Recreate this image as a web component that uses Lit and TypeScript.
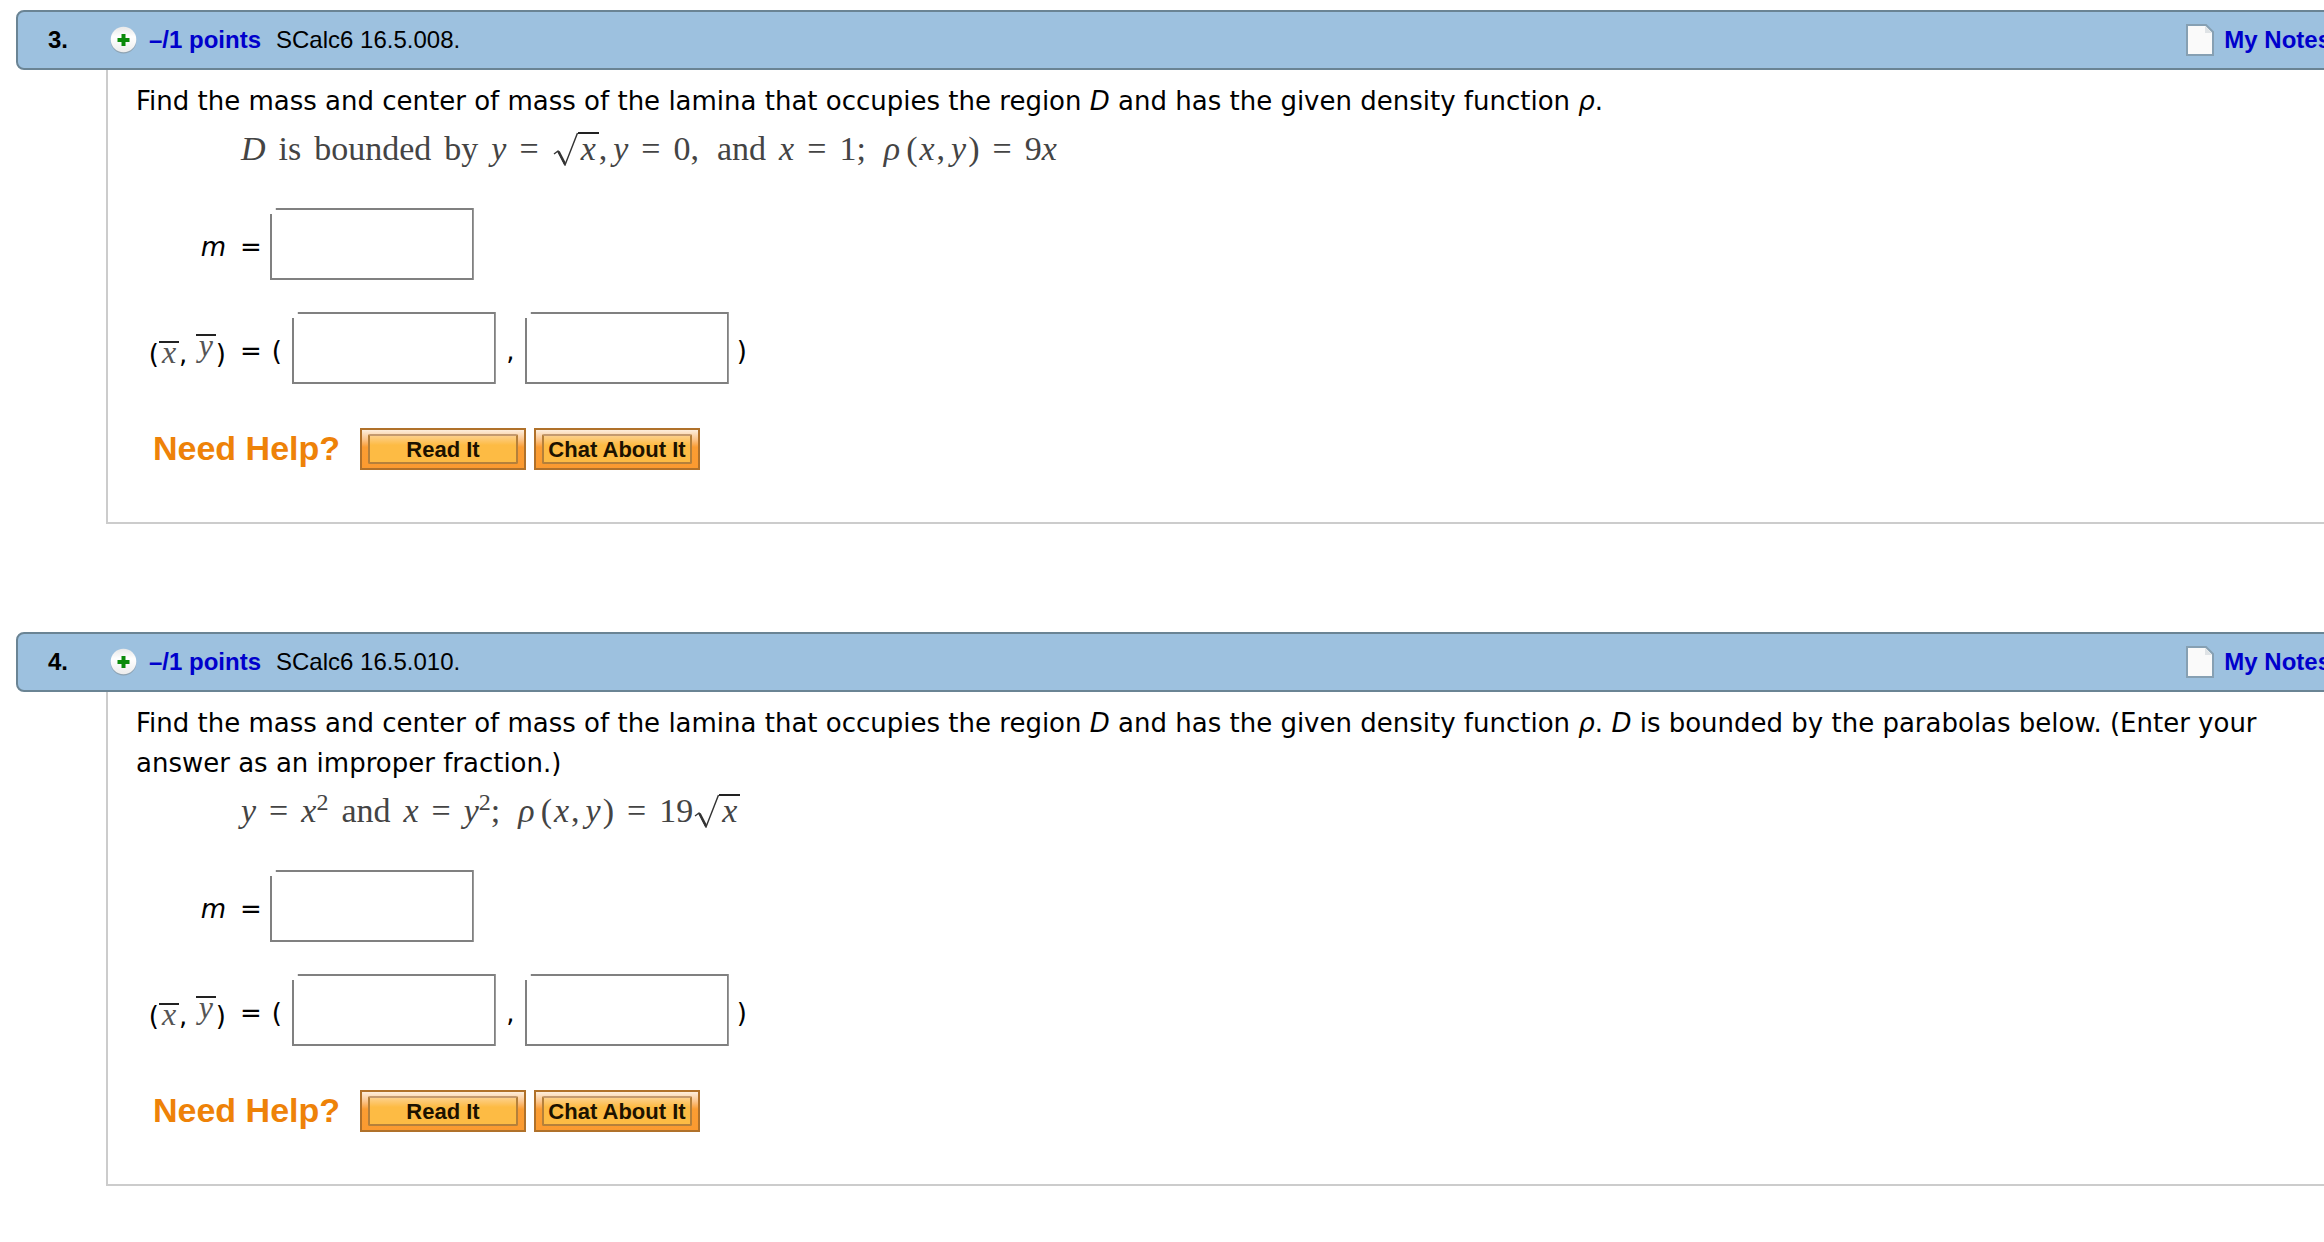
import { LitElement, html, css, TemplateResult } from "lit";
import { customElement, property } from "lit/decorators.js";

const radical = html`<svg class="radical" viewBox="0 0 26 34" width="26" height="34" aria-hidden="true">
  <path d="M2 22 L6 19 L13 33 L25.500 1" fill="none" stroke="#333" stroke-width="1.400" />
  <path d="M6.500 19.500 L13 32" stroke="#333" stroke-width="2.600" />
</svg>`;

const root = (inner: TemplateResult) => html`<span class="root">${radical}<span class="radicand">${inner}</span></span>`;

const density = html`<i>ρ</i><span class="args"><span>(</span><i>x</i><span>,</span><i class="second">y</i><span>)</span></span>`;

@customElement("question-block")
export class QuestionBlock extends LitElement {
  @property() number = "";
  @property() source = "";
  @property({ attribute: false }) prompt: TemplateResult = html``;
  @property({ attribute: false }) formula: TemplateResult = html``;

  static styles = css`
    :host {
      display: block;
    }
    .header {
      box-sizing: border-box;
      display: flex;
      align-items: center;
      height: 60px;
      margin: 0 -24px 0 16px;
      padding: 0 15px 0 30px;
      border: 2px solid #6a8494;
      border-radius: 8px;
      background: #9dc1df;
      font: 24px/28px "Liberation Sans", Arial, sans-serif;
      color: #000;
    }
    .number {
      width: 62px;
      margin: 0;
      font-size: 24px;
      font-weight: bold;
    }
    .expand {
      display: flex;
      padding: 0;
      border: 0;
      background: none;
    }
    a {
      color: #0000cc;
      font-weight: bold;
      text-decoration: none;
    }
    .points {
      margin: 0 15px 0 11px;
    }
    .notes {
      display: flex;
      align-items: center;
      gap: 10px;
      margin-left: auto;
      white-space: nowrap;
    }
    .body {
      margin-left: 106px;
      padding: 11px 36px 52px 28px;
      border-left: 2px solid #ccc;
      border-bottom: 2px solid #ccc;
      font: 26px/40px "DejaVu Sans", Verdana, sans-serif;
      color: #000;
    }
    .prompt {
      margin: 0;
    }
    .formula {
      display: flex;
      align-items: baseline;
      height: 87px;
      padding-left: 105px;
      box-sizing: border-box;
      font: 34px/56px "Liberation Serif", "Times New Roman", serif;
      color: #444;
      white-space: nowrap;
    }
    .word {
      margin-right: 13px;
    }
    .rel {
      margin: 0 13px;
    }
    .stop {
      margin-right: 18px;
    }
    .args {
      display: flex;
      gap: 2px;
      margin-left: 6px;
    }
    .second {
      margin-left: 6px;
    }
    .args .second {
      margin-left: 4px;
    }
    sup {
      font-size: 24px;
      line-height: 0;
    }
    .root {
      display: flex;
      align-items: flex-end;
      line-height: 30px;
    }
    .radical {
      display: block;
      margin-bottom: -2px;
    }
    .radicand {
      align-self: baseline;
      border-top: 2px solid #222;
      padding: 0 3px;
    }
    .row {
      display: flex;
      align-items: center;
      height: 72px;
      margin-bottom: 32px;
    }
    .row span,
    .row label {
      padding-top: 6px;
    }
    .label {
      display: flex;
      justify-content: flex-end;
      align-items: baseline;
      width: 90px;
      margin-right: 14px;
    }
    .row .pair {
      padding-top: 12px;
    }
    .row .mean {
      font: italic 32px/18px "Liberation Serif", "Times New Roman", serif;
      color: #555;
      border-top: 2px solid #222;
      padding: 0 3px;
    }
    .raised {
      align-self: flex-start;
    }
    .equals {
      margin-right: 8px;
    }
    input {
      box-sizing: border-box;
      width: 204px;
      height: 72px;
      padding: 0 12px;
      border: 2px solid #808080;
      border-radius: 0;
      background: #fff;
      font: inherit;
      outline: none;
      clip-path: polygon(6px 0, 100% 0, 100% 100%, 0 100%, 0 6px, 6px 6px);
    }
    .open {
      width: 20px;
      padding-left: 2px;
    }
    .comma {
      width: 29px;
      text-align: center;
    }
    .close {
      padding-left: 8px;
    }
    .help {
      display: flex;
      align-items: center;
      gap: 8px;
      padding: 12px 0 0 17px;
    }
    .need {
      width: 199px;
      height: 42px;
      font: bold 34px/40px "Liberation Sans", Arial, sans-serif;
      color: #ee8208;
      white-space: nowrap;
    }
    .help button {
      box-sizing: border-box;
      width: 166px;
      height: 42px;
      padding: 4px 6px;
      border: 2px solid #b0712a;
      border-radius: 0;
      background: linear-gradient(#fdeedd, #fbc48a 25%, #fb9d33 45%, #fb9a30);
      color: #1c1200;
    }
    .face {
      display: flex;
      justify-content: center;
      box-sizing: border-box;
      height: 30px;
      border: 2px solid #b5803a;
      border-top-color: #c49a70;
      border-radius: 2px;
      background: linear-gradient(#fdd08a, #fdbb44 35%);
      font: bold 22px/28px "Liberation Sans", Arial, sans-serif;
      white-space: nowrap;
    }
  `;

  render() {
    return html`
      <header class="header">
        <h2 class="number">${this.number}.</h2>
        <button class="expand" aria-label="Expand question">
          <svg viewBox="0 0 28 28" width="28" height="28">
            <defs>
              <linearGradient id="disc" x1="0" y1="0" x2="0" y2="1">
                <stop offset="0" stop-color="#e8e8e8" />
                <stop offset="0.4" stop-color="#ffffff" />
                <stop offset="1" stop-color="#ececec" />
              </linearGradient>
            </defs>
            <circle cx="13.500" cy="14.800" r="12.800" fill="#8a9aa6" opacity="0.800" />
            <circle cx="13.500" cy="13.500" r="12.800" fill="url(#disc)" />
            <path d="M11.500 8h4v4h4v4h-4v4h-4v-4h-4v-4h4z" fill="#0a8a0a" />
          </svg>
        </button>
        <a class="points" href="#points">–/1 points</a>
        <span>${this.source}</span>
        <a class="notes" href="#notes">
          <svg viewBox="0 0 28 32" width="28" height="32" aria-hidden="true">
            <path d="M1 1h19l7 7v23H1z" fill="#fafafa" stroke="#86a0b3" stroke-width="2" />
            <path d="M19 2v7h7z" fill="#dfe3e6" />
          </svg>
          My Notes
        </a>
      </header>
      <section class="body">
        <p class="prompt">${this.prompt}</p>
        <div class="formula">${this.formula}</div>
        <div class="row">
          <label class="label" for="mass"><i>m</i></label>
          <span class="equals">=</span>
          <input id="mass" type="text" />
        </div>
        <div class="row">
          <span class="label pair">(<span class="mean">x</span>,&nbsp;<span class="mean raised">y</span>)</span>
          <span class="equals">=</span>
          <span class="open">(</span>
          <input type="text" aria-label="x coordinate" />
          <span class="comma">,</span>
          <input type="text" aria-label="y coordinate" />
          <span class="close">)</span>
        </div>
        <div class="help">
          <span class="need">Need Help?</span>
          <button><span class="face">Read It</span></button>
          <button><span class="face">Chat About It</span></button>
        </div>
      </section>
    `;
  }
}

@customElement("app-root")
export class AppRoot extends LitElement {
  static styles = css`
    :host {
      display: block;
      overflow: hidden;
      background: #fff;
    }
    main {
      display: flex;
      flex-direction: column;
      gap: 108px;
      padding: 10px 0 56px;
    }
  `;

  render() {
    const lead = html`Find the mass and center of mass of the lamina that occupies the region <i>D</i> and has the given density function <i>ρ</i>.`;
    return html`
      <main>
        <question-block
          number="3"
          source="SCalc6 16.5.008."
          .prompt=${lead}
          .formula=${html`<i class="word">D</i><span class="word">is</span><span class="word">bounded</span><span class="word">by</span><i>y</i><span class="rel">=</span>${root(html`<i>x</i>`)}<span>,</span><i class="second">y</i><span class="rel">=</span><span class="stop">0,</span><span class="word">and</span><i>x</i><span class="rel">=</span><span class="stop">1;</span>${density}<span class="rel">=</span><span>9<i>x</i></span>`}
        ></question-block>
        <question-block
          number="4"
          source="SCalc6 16.5.010."
          .prompt=${html`${lead} <i>D</i> is bounded by the parabolas below. (Enter your answer as an improper fraction.)`}
          .formula=${html`<i>y</i><span class="rel">=</span><span class="word"><i>x</i><sup>2</sup></span><span class="word">and</span><i>x</i><span class="rel">=</span><span class="stop"><i>y</i><sup>2</sup>;</span>${density}<span class="rel">=</span><span>19</span>${root(html`<i>x</i>`)}`}
        ></question-block>
      </main>
    `;
  }
}
